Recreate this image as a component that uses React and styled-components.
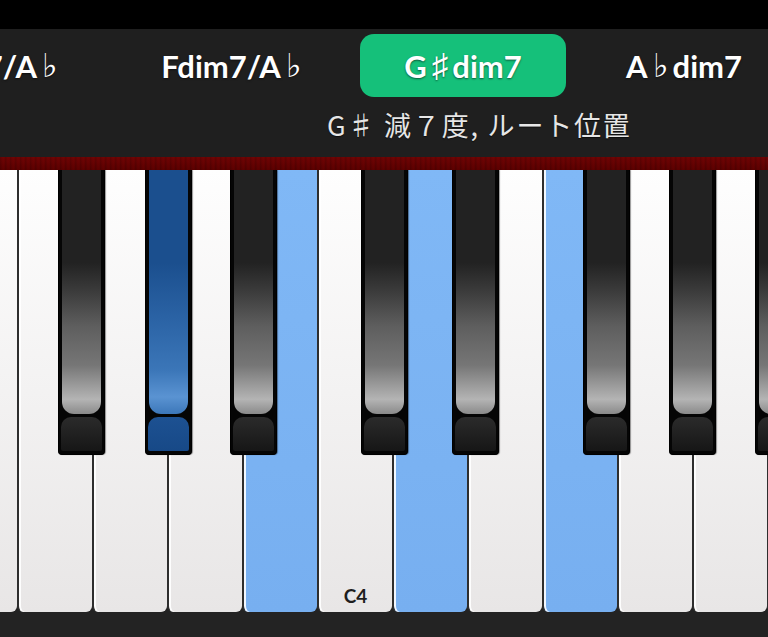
import React from "react";
import styled, { createGlobalStyle } from "styled-components";

const Global = createGlobalStyle`
  html, body {
    margin: 0;
    padding: 0;
    background: #232323;
    overflow: hidden;
  }
  * { box-sizing: border-box; }
`;

const Screen = styled.div`
  width: 768px;
  height: 637px;
  display: flex;
  flex-direction: column;
  background: #232323;
  overflow: hidden;
  font-family: "Lato", "Noto Sans CJK JP", sans-serif;
`;

const StatusStrip = styled.div`
  height: 29px;
  background: #000;
  flex-shrink: 0;
`;

const Header = styled.div`
  height: 128px;
  background: #1f1f1f;
  display: flex;
  flex-direction: column;
  flex-shrink: 0;
`;

const ChordRow = styled.div`
  display: flex;
  gap: 15px;
  margin-top: 5px;
  margin-left: -135px;
  white-space: nowrap;
`;

const ChordTab = styled.div`
  width: ${(p) => p.$w}px;
  height: 63px;
  display: flex;
  align-items: center;
  justify-content: center;
  border-radius: 14px;
  font-size: 31px;
  font-weight: 700;
  color: #fff;
  text-shadow: 0 1px 2px rgba(0, 0, 0, 0.55);
  background: ${(p) => (p.$active ? "#15c07a" : "transparent")};
  flex-shrink: 0;

  span {
    font-family: "DejaVu Sans", sans-serif;
    font-weight: 200;
    font-size: 33px;
    margin: 0 4px 0 5px;
  }
`;

const Subtitle = styled.div`
  margin-top: 8px;
  padding-left: 327px;
  font-family: "Noto Sans CJK JP", "Lato", sans-serif;
  font-size: 27px;
  color: #e6e6e6;
  letter-spacing: 1.8px;
  white-space: nowrap;
  text-shadow: 0 1px 1px rgba(0, 0, 0, 0.6);
`;

const Felt = styled.div`
  height: 13px;
  flex-shrink: 0;
  background: repeating-linear-gradient(
      90deg,
      rgba(0, 0, 0, 0.12) 0px,
      rgba(0, 0, 0, 0) 2px,
      rgba(255, 0, 0, 0.05) 3px,
      rgba(0, 0, 0, 0) 5px
    ),
    linear-gradient(#6a0404, #560000);
`;

const Keyboard = styled.div`
  position: relative;
  height: 442px;
  flex-shrink: 0;
  background: #232323;
  overflow: hidden;
`;

const WhiteRow = styled.div`
  display: flex;
  height: 100%;
  margin-left: -58px;
`;

const WhiteKey = styled.div`
  width: 75px;
  height: 100%;
  flex-shrink: 0;
  position: relative;
  border-left: 2px solid #2e2e2e;
  border-radius: 0 0 6px 6px;
  box-shadow: inset 2px 0 0 rgba(255, 255, 255, 0.9);
  background: ${(p) =>
    p.$lit
      ? "linear-gradient(#80b8f6, #77aff0)"
      : "linear-gradient(#fefefe, #f3f2f2 50%, #e8e6e6)"};
  display: flex;
  align-items: flex-end;
  justify-content: center;
  padding-bottom: 5px;
`;

const KeyLabel = styled.div`
  font-family: "Lato", sans-serif;
  font-weight: 700;
  font-size: 19px;
  color: #1e1e1e;
`;

const BlackKey = styled.div`
  position: absolute;
  top: 0;
  width: 47px;
  height: 285px;
  background: #050505;
  border: 1px solid #000;
  border-top: none;
  border-radius: 0 0 4px 4px;
  display: flex;
  flex-direction: column;
  padding: 0 2px 3px;
  box-shadow: 1px 0 1px rgba(0, 0, 0, 0.4);
`;

const KeyFace = styled.div`
  flex: 1;
  border-radius: 0 0 12px 12px;
  margin: 0 1px;
  background: ${(p) =>
    p.$lit
      ? "linear-gradient(#1b4f8e 0%, #1b4f8e 38%, #2a62a4 60%, #3b76b8 82%, #5a93d2 93%, #3c77b9 100%)"
      : "linear-gradient(#222 0%, #222 38%, #3c3c3c 50%, #5e5e5e 64%, #767676 80%, #b4b4b4 94%, #8a8a8a 100%)"};
`;

const KeyLip = styled.div`
  height: 34px;
  margin: 3px 0 0;
  border-radius: 10px 10px 2px 2px;
  background: ${(p) =>
    p.$lit
      ? "linear-gradient(#1d5192, #174987)"
      : "linear-gradient(#2b2b2b, #161616)"};
`;

const chords = [
  { root: "Ddim7/A", acc: "♭", after: "", w: 242 },
  { root: "Fdim7/A", acc: "♭", after: "", w: 223 },
  { root: "G", acc: "♯", after: "dim7", w: 206, active: true },
  { root: "A", acc: "♭", after: "dim7", w: 206 },
];

const whites = [
  { n: "E3" },
  { n: "F3" },
  { n: "G3" },
  { n: "A3" },
  { n: "B3", lit: true },
  { n: "C4", label: true },
  { n: "D4", lit: true },
  { n: "E4" },
  { n: "F4", lit: true },
  { n: "G4" },
  { n: "A4" },
  { n: "B4" },
];

const blacks = [
  { n: "F#3", x: 58 },
  { n: "G#3", x: 145, lit: true },
  { n: "A#3", x: 230 },
  { n: "C#4", x: 361 },
  { n: "D#4", x: 452 },
  { n: "F#4", x: 583 },
  { n: "G#4", x: 669 },
  { n: "A#4", x: 755 },
];

export default function App() {
  return (
    <>
      <Global />
      <Screen>
        <StatusStrip />
        <Header>
          <ChordRow>
            {chords.map((c) => (
              <ChordTab key={c.root + c.after} $w={c.w} $active={c.active}>
                {c.root}
                <span>{c.acc}</span>
                {c.after}
              </ChordTab>
            ))}
          </ChordRow>
          <Subtitle>G♯ 減７度, ルート位置</Subtitle>
        </Header>
        <Felt />
        <Keyboard>
          <WhiteRow>
            {whites.map((w) => (
              <WhiteKey key={w.n} $lit={w.lit}>
                {w.label && <KeyLabel>{w.n}</KeyLabel>}
              </WhiteKey>
            ))}
          </WhiteRow>
          {blacks.map((b) => (
            <BlackKey key={b.n} style={{ left: b.x }}>
              <KeyFace $lit={b.lit} />
              <KeyLip $lit={b.lit} />
            </BlackKey>
          ))}
        </Keyboard>
      </Screen>
    </>
  );
}
